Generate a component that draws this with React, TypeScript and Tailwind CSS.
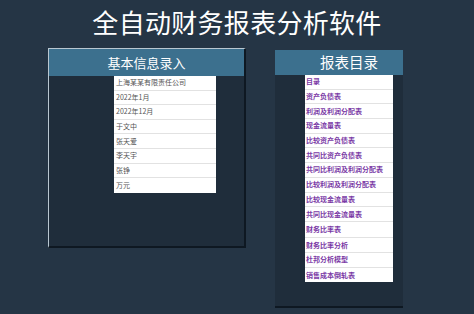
import React from "react";

const info = ["上海某某有限责任公司", "2022年1月", "2022年12月", "于文中", "张天爱", "李天宇", "张铮", "万元"];
const catalog = [
  "目录",
  "资产负债表",
  "利润及利润分配表",
  "现金流量表",
  "比较资产负债表",
  "共同比资产负债表",
  "共同比利润及利润分配表",
  "比较利润及利润分配表",
  "比较现金流量表",
  "共同比现金流量表",
  "财务比率表",
  "财务比率分析",
  "杜邦分析模型",
  "销售成本倒轧表",
];

export default function App() {
  return (
    <div
      className="w-[474px] h-[314px] overflow-hidden bg-[#253545] flex flex-col"
      style={{ fontFamily: '"Noto Sans CJK SC", "Noto Sans", sans-serif' }}
    >
      <div className="h-[48px] flex items-start justify-center pt-[4px]">
        <span className="text-[26px] leading-[36px] text-white tracking-[0.3px]">全自动财务报表分析软件</span>
      </div>
      <div className="flex items-start pl-[48px] gap-[29px]">
        {/* Left panel */}
        <div className="w-[198px] h-[200px] flex flex-col bg-[#1f2d3b] border-t border-l border-[#b9c7d1] border-r-2 border-b-2 border-r-[#0e1822] border-b-[#0e1822]">
          <div className="h-[27px] bg-[#3c708e] flex items-center justify-center">
            <span className="text-[13px] leading-none text-white">基本信息录入</span>
          </div>
          <div className="ml-[65px] w-[102px] bg-white flex flex-col">
            {info.map((t, i) => (
              <div
                key={i}
                className={`h-[14.6px] flex items-center pl-[2px] text-[7px] leading-none text-[#555] ${i < info.length - 1 ? "border-b border-[#e2e2e2]" : ""}`}
              >
                {t}
              </div>
            ))}
          </div>
        </div>
        {/* Right panel */}
        <div className="mt-[2px] w-[128px] h-[258px] flex flex-col bg-[#1f2d3b] border-b-2 border-[#0e1822]">
          <div className="h-[25px] bg-[#3c708e] flex items-center justify-center pl-[20px]">
            <span className="text-[14.5px] leading-none text-white">报表目录</span>
          </div>
          <div className="ml-[30px] w-[88px] bg-white flex flex-col">
            {catalog.map((t, i) => (
              <div
                key={i}
                className={`${i === 10 ? "h-[16.5px]" : "h-[14.7px]"} flex items-center pl-[1px] text-[7px] leading-none font-semibold text-[#7b3aa6] ${i < catalog.length - 1 ? "border-b border-[#e2e2e2]" : ""}`}
                style={{ fontFamily: '"Noto Sans CJK SC", serif' }}
              >
                {t}
              </div>
            ))}
          </div>
        </div>
      </div>
    </div>
  );
}
